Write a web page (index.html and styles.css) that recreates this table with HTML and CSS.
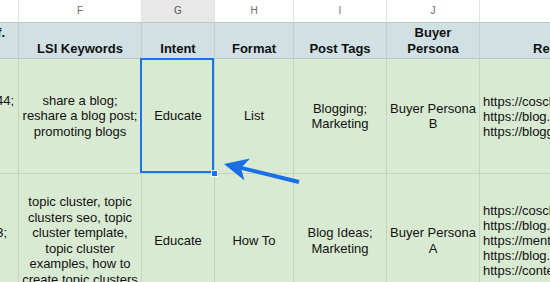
FILE: index.html
```html
<!DOCTYPE html>
<html>
<head>
<meta charset="utf-8">
<link rel="stylesheet" href="styles.css">
</head>
<body>
<div class="sheet">
  <div class="grid">
    <div class="cell letter"></div>
    <div class="cell letter">F</div>
    <div class="cell letter sel">G</div>
    <div class="cell letter">H</div>
    <div class="cell letter">I</div>
    <div class="cell letter">J</div>
    <div class="cell letter"></div>

    <div class="cell head edge"><span class="pad-f">f.<br>&nbsp;</span></div>
    <div class="cell head">LSI Keywords</div>
    <div class="cell head">Intent</div>
    <div class="cell head">Format</div>
    <div class="cell head">Post Tags</div>
    <div class="cell head">Buyer<br>Persona</div>
    <div class="cell head url-head">Related</div>

    <div class="cell data edge"><span class="pad-44">44;<br>&nbsp;<br>&nbsp;</span></div>
    <div class="cell data">share a blog;<br>reshare a blog post;<br>promoting blogs</div>
    <div class="cell data">Educate</div>
    <div class="cell data">List</div>
    <div class="cell data">Blogging;<br>Marketing</div>
    <div class="cell data">Buyer Persona<br>B</div>
    <div class="cell data url"><div>https://coschedule.com/blog<br>https://blog.<span class="hl">h</span>ubspot.com<br>https://bloggingwizard.com</div></div>

    <div class="cell data edge tall"><span class="pad-3">3;<br>&nbsp;</span></div>
    <div class="cell data tall">topic cluster, topic<br>clusters seo, topic<br>cluster template,<br>topic cluster<br>examples, how to<br>create topic clusters</div>
    <div class="cell data tall">Educate</div>
    <div class="cell data tall">How To</div>
    <div class="cell data tall">Blog Ideas;<br>Marketing</div>
    <div class="cell data tall">Buyer Persona<br>A</div>
    <div class="cell data url tall"><div>https://coschedule.com/blog<br>https://blog.<span class="hl">h</span>ubspot.com<br>https://mentionlytics.com<br>https://blog.<span class="hl">h</span>ubspot.com<br>https://contentmarketing.com</div></div>
  </div>

  <div class="selection"><div class="handle"></div></div>

  <svg class="arrow" width="550" height="282" viewBox="0 0 550 282">
    <line x1="299" y1="182" x2="240" y2="167.6" stroke="#1a6ee6" stroke-width="4"/>
    <path d="M224 164 L250 158.5 L241 168 L244.5 180.5 Z" fill="#1a6ee6"/>
  </svg>
</div>
</body>
</html>
```

FILE: styles.css
```css
html, body {
  margin: 0;
  padding: 0;
  width: 550px;
  height: 282px;
  overflow: hidden;
  background: #ffffff;
}

.sheet {
  position: relative;
  width: 550px;
  height: 282px;
  overflow: hidden;
  font-family: "Liberation Sans", Arial, Helvetica, sans-serif;
  font-size: 13px;
  color: #111;
}

.grid {
  display: grid;
  grid-template-columns: 19px 123px 73px 79px 93px 93px 140px;
  grid-template-rows: 23px 36px 115px 134px;
}

.cell {
  box-sizing: border-box;
  border-right: 1px solid #c3d3c0;
  border-bottom: 1px solid #c3d3c0;
  overflow: hidden;
  display: flex;
  justify-content: center;
  text-align: center;
  line-height: 15.5px;
  white-space: nowrap;
}

.letter {
  background: #ffffff;
  border-right: 1px solid #e1e1e1;
  border-bottom: 1px solid #c4c4c4;
  align-items: center;
  font-size: 10px;
  color: #6b6b6b;
}

.letter.sel {
  background: #e8e8e8;
  color: #555;
}

.head {
  background: #d0e0e3;
  border-right: 1px solid #bdd0d3;
  border-bottom: 1px solid #b9c9c6;
  align-items: flex-end;
  font-weight: bold;
  line-height: 16px;
  padding-bottom: 1px;
}

.data {
  background: #d9ead3;
  align-items: center;
}

.edge {
  justify-content: flex-end;
  text-align: right;
}

.pad-f { padding-right: 13px; }
.pad-44 { padding-right: 4px; }
.pad-3 { padding-right: 11px; }

.url {
  justify-content: flex-start;
  text-align: left;
  padding-left: 3px;
  line-height: 15px;
  border-right: none;
}

.url-head {
  justify-content: flex-start;
  padding-left: 53px;
  border-right: none;
}

.hl {
  color: #c9a060;
}

.selection {
  position: absolute;
  left: 140px;
  top: 58px;
  width: 74px;
  height: 115px;
  box-sizing: border-box;
  border: 2px solid #1a73e8;
}

.handle {
  position: absolute;
  right: -6px;
  bottom: -6px;
  width: 7px;
  height: 7px;
  box-sizing: border-box;
  background: #1a73e8;
  border: 1px solid #ffffff;
}

.arrow {
  position: absolute;
  left: 0;
  top: 0;
}
```
